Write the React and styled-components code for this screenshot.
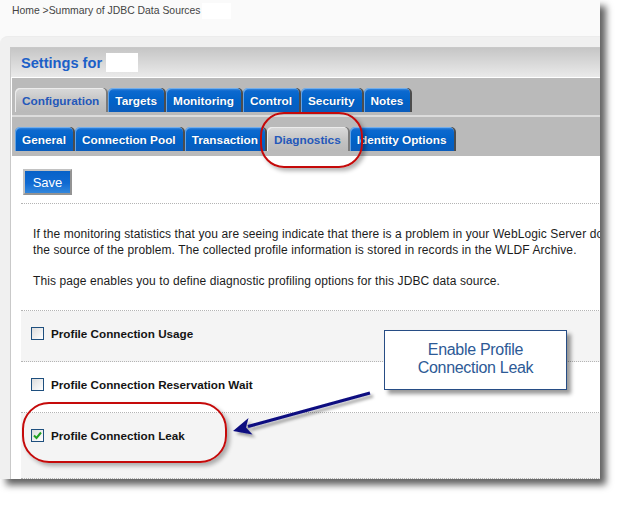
import React from "react";
import styled, { createGlobalStyle, css } from "styled-components";

const GlobalStyle = createGlobalStyle`
  html, body { margin: 0; padding: 0; background: #ffffff; }
  body { font-family: "Liberation Sans", Arial, sans-serif; }
  * { box-sizing: border-box; }
`;

const FONT = `"Liberation Sans", Arial, sans-serif`;

const Stage = styled.div`
  position: relative;
  width: 625px;
  height: 505px;
  background: #ffffff;
  overflow: hidden;
`;

const Shot = styled.div`
  width: 600px;
  height: 479px;
  overflow: hidden;
  background: #fafafa;
  box-shadow: 6px 6px 7px rgba(0, 0, 0, 0.62);
  border-bottom-right-radius: 2px;
`;

const Crumb = styled.div`
  height: 36px;
  padding: 3px 0 0 12px;
  font: 10.4px/16px ${FONT};
  color: #444;
  white-space: nowrap;
`;

const Blank = styled.span`
  display: inline-block;
  vertical-align: top;
  width: ${(p) => p.$w}px;
  height: ${(p) => p.$h}px;
  margin-left: ${(p) => p.$ml || 0}px;
  background: #ffffff;
`;

const Panel = styled.div`
  width: 920px;
  background: #f0f0f0;
  border-top-left-radius: 8px;
  border-top: 1px solid #ececec;
  padding: 10px 0 0 10px;
`;

const Box = styled.div`
  width: 900px;
  border: 1px solid #c9c9c9;
  background: #ffffff;
`;

const Header = styled.div`
  height: 30px;
  display: flex;
  align-items: center;
  padding-left: 10px;
  background: linear-gradient(#c6c6c6, #eaeaea);
  border-bottom: 1px solid #ffffff;
  font: bold 14.6px ${FONT};
  color: #1b60c8;
`;

const TabBar = styled.div`
  display: flex;
  align-items: flex-end;
  gap: 2px;
  margin-left: 1px;
  background: #bababa;
  padding: ${(p) => (p.$second ? "10px 0 5px 3px" : "10px 0 3px 3px")};
  border-bottom: ${(p) => (p.$second ? "none" : "2px solid #dcdcdc")};
`;

const Tab = styled.div`
  height: 24px;
  padding: 2px 7px 0;
  display: flex;
  align-items: center;
  font: bold 11.8px ${FONT};
  color: #ffffff;
  white-space: nowrap;
  border-radius: 5px 5px 0 0;
  background: linear-gradient(#4792e2 0px, #0c69cf 3px, #0062c8 55%, #0a5cbc 100%);
  box-shadow: inset 1px 1px 0 rgba(140, 190, 240, 0.7), 2px 0 0 #4d4d4d;
  text-shadow: 0 0 1px rgba(0, 30, 90, 0.5);
  ${(p) =>
    p.$active &&
    css`
      background: linear-gradient(#dadada, #c2c2c2 60%, #b9b9b9);
      box-shadow: inset 1px 1px 0 #ececec, 2px 0 0 #7a7a7a;
      color: #2458ba;
      text-shadow: none;
    `}
`;

const Content = styled.div`
  padding-left: 10px;
  background: #ffffff;
`;

const Toolbar = styled.div`
  padding: 13px 0 8px 2px;
  border-bottom: 1px dotted #b4b4b4;
`;

const SaveButton = styled.button`
  display: block;
  width: 49px;
  height: 26px;
  padding: 0;
  border: 2px solid;
  border-color: #c2c2c2 #939393 #939393 #c2c2c2;
  background: linear-gradient(#0761c8, #0f6ad2 55%, #3387dc);
  color: #ffffff;
  font: 13px ${FONT};
  cursor: pointer;
`;

const Intro = styled.div`
  padding: 22px 0 21px 12px;
  font: 12px/16px ${FONT};
  letter-spacing: 0.1px;
  color: #1c1c1c;
  white-space: nowrap;
  border-bottom: 1px dotted #b4b4b4;
`;

const Para = styled.p`
  margin: 0;
  & + & { margin-top: 15px; }
`;

const Row = styled.div`
  display: flex;
  align-items: flex-start;
  gap: 7px;
  height: ${(p) => (p.$tall ? 66 : 51)}px;
  padding: 16px 0 0 10px;
  background: ${(p) => (p.$shade ? "#f4f4f4" : "#ffffff")};
  border-bottom: 1px dotted #b4b4b4;
`;

const Check = styled.span`
  width: 13px;
  height: 13px;
  flex: none;
  border: 1px solid #1e4f7e;
  background: linear-gradient(135deg, #dcdcdc, #ffffff);
  display: flex;
  align-items: center;
  justify-content: center;
`;

const Label = styled.span`
  font: bold 11.7px/13px ${FONT};
  color: #141414;
`;

const Oval = styled.div`
  position: absolute;
  left: ${(p) => p.$x}px;
  top: ${(p) => p.$y}px;
  width: ${(p) => p.$w}px;
  height: ${(p) => p.$h}px;
  border: 2px solid #c50a0a;
  border-radius: ${(p) => p.$r}px;
  box-shadow: 3px 3px 4px rgba(0, 0, 0, 0.3);
  pointer-events: none;
`;

const Callout = styled.div`
  position: absolute;
  left: 384px;
  top: 330px;
  width: 183px;
  height: 60px;
  padding-top: 10px;
  border: 1px solid #274d85;
  background: #ffffff;
  box-shadow: 4px 4px 4px rgba(0, 0, 0, 0.4);
  font: 16px/18px ${FONT};
  letter-spacing: -0.3px;
  color: #2d5a96;
  text-align: center;
`;

const ArrowSvg = styled.svg`
  position: absolute;
  left: 0;
  top: 0;
  overflow: visible;
  pointer-events: none;
`;

function CheckMark() {
  return (
    <svg width="9" height="9" viewBox="0 0 9 9">
      <path d="M1 4.5 L3.5 7 L8 1.5" fill="none" stroke="#23a023" strokeWidth="2" />
    </svg>
  );
}

const topTabs = ["Configuration", "Targets", "Monitoring", "Control", "Security", "Notes"];
const subTabs = ["General", "Connection Pool", "Transaction", "Diagnostics", "Identity Options"];

const rows = [
  { label: "Profile Connection Usage", checked: false },
  { label: "Profile Connection Reservation Wait", checked: false },
  { label: "Profile Connection Leak", checked: true },
];

export default function App() {
  return (
    <>
      <GlobalStyle />
      <Stage>
        <Shot>
          <Crumb>
            Home &gt;Summary of JDBC Data Sources
            <Blank $w={29} $h={16} $ml={1} />
          </Crumb>
          <Panel>
            <Box>
              <Header>
                Settings for
                <Blank $w={32} $h={19} $ml={4} />
              </Header>
              <TabBar>
                {topTabs.map((t) => (
                  <Tab key={t} $active={t === "Configuration"}>
                    {t}
                  </Tab>
                ))}
              </TabBar>
              <TabBar $second>
                {subTabs.map((t) => (
                  <Tab key={t} $active={t === "Diagnostics"}>
                    {t}
                  </Tab>
                ))}
              </TabBar>
              <Content>
                <Toolbar>
                  <SaveButton>Save</SaveButton>
                </Toolbar>
                <Intro>
                  <Para>
                    If the monitoring statistics that you are seeing indicate that there is a problem in your WebLogic Server domain, you can use diagnostic profiling to help isolate
                    <br />
                    the source of the problem. The collected profile information is stored in records in the WLDF Archive.
                  </Para>
                  <Para>This page enables you to define diagnostic profiling options for this JDBC data source.</Para>
                </Intro>
                {rows.map((r, i) => (
                  <Row key={r.label} $shade={i !== 1} $tall={i === 2}>
                    <Check>{r.checked && <CheckMark />}</Check>
                    <Label>{r.label}</Label>
                  </Row>
                ))}
              </Content>
            </Box>
          </Panel>
        </Shot>

        <Oval $x={260} $y={112} $w={103} $h={56} $r={24} />
        <Oval $x={22} $y={402} $w={205} $h={61} $r={27} />

        <Callout>
          Enable Profile
          <br />
          Connection Leak
        </Callout>

        <ArrowSvg width="625" height="505" viewBox="0 0 625 505">
          <defs>
            <filter id="ashadow" x="-20%" y="-50%" width="140%" height="200%">
              <feDropShadow dx="3" dy="3" stdDeviation="1.5" floodColor="#000" floodOpacity="0.35" />
            </filter>
          </defs>
          <g filter="url(#ashadow)">
            <line x1="370" y1="393" x2="248" y2="426.5" stroke="#0c0c80" strokeWidth="3.2" />
            <polygon points="233,431 248.5,418 246,427.5 252.5,434.5" fill="#0c0c80" />
          </g>
        </ArrowSvg>
      </Stage>
    </>
  );
}
